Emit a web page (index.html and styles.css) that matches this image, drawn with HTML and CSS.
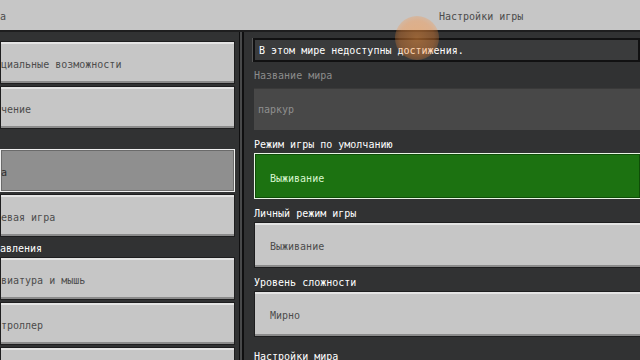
FILE: index.html
```html
<!DOCTYPE html>
<html lang="ru">
<head>
<meta charset="utf-8">
<title>Настройки игры</title>
<link rel="stylesheet" href="styles.css">
</head>
<body>
<div class="screen">
  <header class="topbar">
    <span class="top-left">а</span>
    <span class="title">Настройки игры</span>
  </header>
  <main class="main">
    <nav class="sidebar">
      <div class="nav-btn">циальные возможности</div>
      <div class="nav-btn">чение</div>
      <div class="nav-head"></div>
      <div class="nav-btn selected">а</div>
      <div class="nav-btn">евая игра</div>
      <div class="nav-head">авления</div>
      <div class="nav-btn">виатура и мышь</div>
      <div class="nav-btn">троллер</div>
      <div class="nav-btn"></div>
    </nav>
    <div class="divider"></div>
    <section class="content">
      <div class="notice">В этом мире недоступны достижения.</div>
      <div class="label muted">Название мира</div>
      <div class="input">паркур</div>
      <div class="label">Режим игры по умолчанию</div>
      <div class="choice green">Выживание</div>
      <div class="label">Личный режим игры</div>
      <div class="choice">Выживание</div>
      <div class="label">Уровень сложности</div>
      <div class="choice">Мирно</div>
      <div class="section">Настройки мира</div>
    </section>
  </main>
  <div class="touch"></div>
</div>
</body>
</html>
```

FILE: styles.css
```css
* { box-sizing: border-box; }
html, body { margin: 0; padding: 0; }
body {
  width: 640px;
  height: 360px;
  overflow: hidden;
  background: #313233;
  font-family: "DejaVu Sans Mono", "Liberation Mono", monospace;
  font-size: 10px;
  color: #ffffff;
}
.screen {
  position: relative;
  width: 640px;
  height: 360px;
  overflow: hidden;
}
.topbar {
  height: 32px;
  background: #c6c6c6;
  border-bottom: 2px solid #1e1e1f;
  display: flex;
  align-items: center;
  color: #4c4c4c;
  padding-top: 3px;
}
.top-left { width: 439px; }
.title { white-space: nowrap; }

.main {
  display: flex;
  height: 328px;
}
.sidebar {
  width: 239px;
  padding: 9px 4px 0 0;
  display: flex;
  flex-direction: column;
  gap: 2px;
}
.nav-btn {
  flex: none;
  height: 43px;
  background: #c6c6c6;
  border: 1px solid #1e1e1f;
  box-shadow: inset 0 2px 0 #e4e4e4, inset 0 -2px 0 #8b8b8b;
  color: #4c4c4c;
  display: flex;
  align-items: center;
  white-space: nowrap;
  padding-top: 3px;
}
.nav-btn.selected {
  background: #8f8f8f;
  border: 1px solid #f0f0f0;
  box-shadow: inset 0 0 0 1px #6a6a6a;
  color: #2e2e2e;
}
.nav-head {
  flex: none;
  height: 16px;
  padding-top: 4px;
  line-height: 12px;
  color: #ffffff;
  white-space: nowrap;
}
.divider {
  width: 5px;
  flex: none;
  background: #48494a;
  border-left: 1px solid #0f0f10;
  border-right: 2px solid #0f0f10;
}
.content {
  flex: 1;
  padding: 6px 0 0 10px;
  display: flex;
  flex-direction: column;
  min-width: 0;
}
.notice {
  flex: none;
  height: 24px;
  background: #3a3b3c;
  border: 2px solid #111112;
  box-shadow: -1px 0 0 #555;
  display: flex;
  align-items: center;
  padding-left: 4px;
  white-space: nowrap;
  margin-left: -1px;
}
.label {
  flex: none;
  height: 23px;
  padding-top: 9px;
  line-height: 12px;
  white-space: nowrap;
  color: #ffffff;
}
.label.muted {
  height: 26px;
  padding-top: 8px;
  color: #8c8c8c;
}
.input {
  flex: none;
  height: 42px;
  background: #484848;
  border-top: 1px solid #3a3a3a;
  display: flex;
  align-items: center;
  padding-left: 4px;
  color: #8f8f8f;
}
.choice {
  flex: none;
  height: 46px;
  background: #c6c6c6;
  border: 1px solid #1e1e1f;
  border-right: none;
  box-shadow: inset 0 2px 0 #e4e4e4, inset 0 -2px 0 #8b8b8b;
  color: #4c4c4c;
  display: flex;
  align-items: center;
  padding-left: 15px;
  padding-top: 3px;
}
.choice.green {
  background: #1c7211;
  border: 1px solid #e8f5e4;
  border-right: none;
  box-shadow: inset 0 0 0 1px #0f4d08;
  color: #d8f6cf;
  padding-top: 4px;
}
.section {
  flex: none;
  padding-top: 14px;
  line-height: 12px;
  white-space: nowrap;
}
.touch {
  position: absolute;
  left: 395px;
  top: 16px;
  width: 44px;
  height: 44px;
  border-radius: 50%;
  background: radial-gradient(circle, rgba(255, 150, 60, 0.5) 0%, rgba(255, 140, 50, 0.38) 55%, rgba(255, 140, 50, 0) 100%);
}
```
